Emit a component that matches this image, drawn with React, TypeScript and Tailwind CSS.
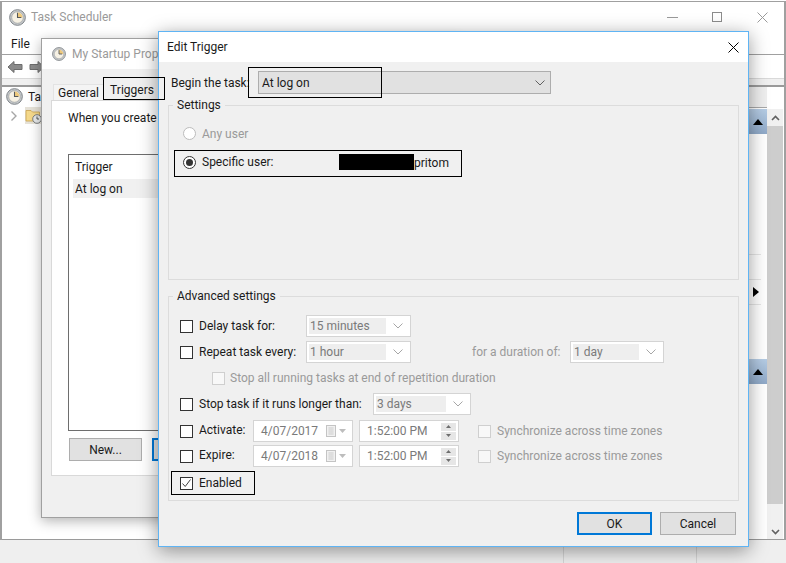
const Clock = ({ size = 16 }: { size?: number }) => (
  <svg width={size} height={size} viewBox="0 0 16 16" className="shrink-0">
    <circle cx="8" cy="8" r="7.4" fill="#c4c7c9" stroke="#7d8286" strokeWidth="0.9" />
    <circle cx="8" cy="8" r="5.4" fill="#f6f1e4" stroke="#8f9498" strokeWidth="0.5" />
    <path d="M8 8V3.2A4.8 4.8 0 0 1 12.8 8Z" fill="#eec97c" />
    <path d="M8 3.6V8H11.6" fill="none" stroke="#55585a" strokeWidth="1" />
  </svg>
);

const FolderClock = () => (
  <svg width="17" height="17" viewBox="0 0 17 17" className="shrink-0">
    <path d="M1 3.5H6L7.5 5H14.5V14H1Z" fill="#f5d98b" stroke="#c9a24e" strokeWidth="0.8" />
    <circle cx="12" cy="12" r="4.3" fill="#e9ebec" stroke="#6f7477" strokeWidth="0.9" />
    <path d="M12 9.5V12H14" fill="none" stroke="#44474a" strokeWidth="0.9" />
  </svg>
);

const NavArrow = ({ flip }: { flip?: boolean }) => (
  <svg width="16" height="14" viewBox="0 0 16 14" className={flip ? "-scale-x-100" : ""}>
    <path d="M1 7L7 1.5V4.5H15V9.5H7V12.5Z" fill="#8b8b8b" stroke="#6c6c6c" strokeWidth="1" />
  </svg>
);

const Chevron = ({ dark }: { dark?: boolean }) => (
  <svg width="10" height="6" viewBox="0 0 10 6" className="shrink-0">
    <path d="M0.5 0.5L5 5L9.5 0.5" fill="none" stroke={dark ? "#606060" : "#a6a6a6"} strokeWidth="1" />
  </svg>
);

const Check = ({ checked, disabled }: { checked?: boolean; disabled?: boolean }) => (
  <span
    className={
      disabled
        ? "w-[13px] h-[13px] shrink-0 border border-[#cfcfcf] bg-[#f8f8f8]"
        : "w-[13px] h-[13px] shrink-0 border border-[#333333] bg-white flex items-center justify-center"
    }
  >
    {checked && (
      <svg width="11" height="11" viewBox="0 0 11 11">
        <path d="M1.5 5.5L4.2 8.5L9.5 1.5" fill="none" stroke="#444444" strokeWidth="1" />
      </svg>
    )}
  </span>
);

const Radio = ({ on }: { on?: boolean }) => (
  <span
    className={
      on
        ? "w-[13px] h-[13px] shrink-0 rounded-full border border-[#333333] bg-white flex items-center justify-center"
        : "w-[13px] h-[13px] shrink-0 rounded-full border border-[#bcbcbc] bg-white"
    }
  >
    {on && <span className="w-[7px] h-[7px] rounded-full bg-[#333333]" />}
  </span>
);

const Combo = ({ value, width }: { value: string; width: string }) => (
  <div className={`${width} h-[22px] shrink-0 flex items-center border border-[#d4d4d4] bg-white p-[2px] pr-[7px]`}>
    <div className="flex-1 h-full flex items-center pl-[1px] bg-[#eeeeee] text-[#7a7a7a]">{value}</div>
    <span className="ml-[7px]">
      <Chevron />
    </span>
  </div>
);

const DateBox = ({ value }: { value: string }) => (
  <div className="w-[100px] h-[22px] shrink-0 flex items-center border border-[#d4d4d4] bg-white pl-[7px] text-[#7a7a7a]">
    <span className="w-[65px]">{value}</span>
    <svg width="21" height="12" viewBox="0 0 21 12">
      <rect x="0.5" y="0.5" width="9" height="11" fill="#f1f1f1" stroke="#c4c4c4" />
      <path d="M2 3H8M2 5H8M2 7H8M2 9H8M4 2V10M6 2V10" stroke="#d0d0d0" strokeWidth="0.7" />
      <path d="M13 4H20L16.5 8Z" fill="#bdbdbd" />
    </svg>
  </div>
);

const TimeBox = ({ value }: { value: string }) => (
  <div className="w-[100px] h-[22px] shrink-0 flex items-center justify-between border border-[#d4d4d4] bg-white pl-[7px] pr-[2px] text-[#7a7a7a]">
    <span>{value}</span>
    <div className="flex flex-col gap-[1px]">
      <div className="w-[15px] h-[8px] bg-[#e6e6e6] flex items-center justify-center">
        <svg width="5" height="3" viewBox="0 0 5 3">
          <path d="M2.5 0L5 3H0Z" fill="#6e6e6e" />
        </svg>
      </div>
      <div className="w-[15px] h-[8px] bg-[#e6e6e6] flex items-center justify-center">
        <svg width="5" height="3" viewBox="0 0 5 3">
          <path d="M0 0H5L2.5 3Z" fill="#6e6e6e" />
        </svg>
      </div>
    </div>
  </div>
);

const Group = ({ title, height, children }: { title: string; height: string; children: React.ReactNode }) => (
  <div className={`relative ${height} border border-[#dcdcdc]`}>
    <span className="absolute -top-[9px] left-[4px] px-[4px] bg-[#f0f0f0] leading-[16px]">{title}</span>
    {children}
  </div>
);

const BlueBar = () => (
  <div className="h-[25px] flex items-center justify-center bg-linear-to-b from-[#b6cde5] to-[#8fa9c8]">
    <svg width="10" height="6" viewBox="0 0 10 6">
      <path d="M5 0L10 6H0Z" fill="#000000" />
    </svg>
  </div>
);

const Annotation = ({ className }: { className: string }) => (
  <div className={`absolute border border-black pointer-events-none ${className}`} />
);

export default function App() {
  return (
    <div className="relative w-[786px] h-[563px] overflow-hidden bg-white text-[12px] leading-[16px] text-[#1a1a1a] font-['Roboto',sans-serif]">
      {/* Task Scheduler main window */}
      <div className="h-full flex flex-col pt-[1px]">
        <div className="flex-1 flex flex-col min-h-0 border-t border-l-2 border-r-2 border-[#a0a0a0]">
          <div className="h-[30px] mb-[2px] shrink-0 flex items-center pl-[7px]">
            <Clock size={17} />
            <span className="ml-[5px] text-[#9a9a9a]">Task Scheduler</span>
            <div className="ml-auto flex items-center">
              <span className="w-[11px] h-[1px] bg-[#9a9a9a]" />
              <span className="ml-[34px] w-[10px] h-[10px] border border-[#8c8c8c]" />
              <svg width="11" height="11" viewBox="0 0 11 11" className="ml-[35px] mr-[16px]">
                <path d="M0.5 0.5L10.5 10.5M10.5 0.5L0.5 10.5" stroke="#9a9a9a" strokeWidth="1" />
              </svg>
            </div>
          </div>
          <div className="h-[20px] shrink-0 flex items-center pl-[9px]">
            <span>File</span>
          </div>
          <div className="h-[24px] shrink-0 flex items-center pl-[5px] gap-[6px] border-t border-[#a0a0a0]">
            <NavArrow />
            <NavArrow flip />
          </div>
          <div className="h-[7px] shrink-0 bg-[#f0f0f0] border-t border-[#d9d9d9]" />
          <div className="flex-1 min-h-0 flex border-t-2 border-b border-[#9a9a9a]">
            <div className="flex-1 pl-[4px] pt-[1px]">
              <div className="flex items-center gap-[5px] h-[17px]">
                <Clock size={17} />
                <span>Tas</span>
              </div>
              <div className="flex items-center h-[17px] mt-[2px] pl-[5px]">
                <svg width="6" height="10" viewBox="0 0 6 10">
                  <path d="M0.5 0.5L5 5L0.5 9.5" fill="none" stroke="#a6a6a6" strokeWidth="1.4" />
                </svg>
                <span className="ml-[8px] bg-[#e6e2d8]">
                  <FolderClock />
                </span>
              </div>
            </div>
            <div className="w-[18px] shrink-0 flex flex-col bg-white">
              <div className="h-[21px] shrink-0 border-b border-[#a8a8a8] bg-[#efefef]" />
              <div className="mt-[1px]">
                <BlueBar />
              </div>
              <div className="mt-[120px] h-[1px] w-[12px] bg-[#e6e6e6]" />
              <div className="mt-[24px] h-[1px] w-[12px] bg-[#e6e6e6]" />
              <div className="mt-[6px] h-[12px] flex items-center pl-[4px]">
                <svg width="6" height="10" viewBox="0 0 6 10">
                  <path d="M0 0L6 5L0 10Z" fill="#000000" />
                </svg>
              </div>
              <div className="mt-[6px] h-[1px] w-[12px] bg-[#e6e6e6]" />
              <div className="mt-[54px]">
                <BlueBar />
              </div>
            </div>
            <div className="w-[16px] mr-[1px] shrink-0 flex flex-col pt-[22px] bg-white">
              <div className="h-[17px] shrink-0 flex items-center justify-center bg-[#f0f0f0]">
                <svg width="9" height="6" viewBox="0 0 9 6">
                  <path d="M1 5L4.5 1.5L8 5" fill="none" stroke="#606060" strokeWidth="1.6" />
                </svg>
              </div>
              <div className="h-[378px] shrink-0 bg-[#cdcdcd]" />
              <div className="flex-1 flex items-end justify-center pb-[4px] bg-[#f0f0f0]">
                <svg width="9" height="6" viewBox="0 0 9 6">
                  <path d="M1 1L4.5 4.5L8 1" fill="none" stroke="#606060" strokeWidth="1.6" />
                </svg>
              </div>
            </div>
          </div>
        </div>
        <div className="h-[23px] shrink-0 flex bg-[#efefef]">
          <div className="w-[564px] border-r border-[#d6d6d6]" />
          <div className="w-[133px] border-r border-[#d6d6d6]" />
        </div>
      </div>

      {/* My Startup Properties dialog */}
      <div className="absolute left-[41px] top-[38px] w-[420px] h-[480px] flex flex-col overflow-hidden bg-[#f0f0f0] border border-[#a0a0a0] shadow-[0_3px_12px_rgba(0,0,0,0.3)]">
        <div className="h-[30px] shrink-0 flex items-center pl-[10px] gap-[6px] bg-white text-[#9a9a9a]">
          <Clock size={14} />
          <span className="whitespace-nowrap">My Startup Prop</span>
        </div>
        <div className="flex h-[16px] mt-[15px] ml-[11px]">
          <div className="w-[50px] flex items-center justify-center bg-[#f4f4f4] border-t border-l border-[#e3e3e3]">General</div>
          <div className="w-[58px] flex items-center justify-center -mt-[5px]">Triggers</div>
        </div>
        <div className="ml-[9px] h-[376px] w-[400px] bg-white border border-[#d9d9d9] pl-[16px] pt-[9px]">
          <p className="whitespace-nowrap">When you create</p>
          <div className="mt-[28px] h-[277px] w-[360px] border border-[#6e6e6e] px-[4px]">
            <div className="h-[24px] flex items-center pl-[2px]">Trigger</div>
            <div className="h-[19px] flex items-center pl-[2px] bg-[#f0f0f0]">At log on</div>
          </div>
          <div className="flex gap-[10px] mt-[7px] ml-[1px]">
            <button className="w-[73px] h-[23px] bg-[#e1e1e1] border border-[#adadad]">New...</button>
            <div className="w-[73px] h-[23px] bg-[#e1e1e1] border-2 border-[#0078d7]" />
          </div>
        </div>
      </div>

      {/* Edit Trigger dialog */}
      <div className="absolute left-[158px] top-[31px] w-[591px] h-[516px] flex flex-col bg-[#f0f0f0] border border-[#5fb4f4] shadow-[0_4px_18px_rgba(0,0,0,0.4)]">
        <div className="h-[30px] shrink-0 flex items-center justify-between pl-[8px] pr-[9px] bg-white">
          <span>Edit Trigger</span>
          <svg width="11" height="11" viewBox="0 0 11 11">
            <path d="M0.5 0.5L10.5 10.5M10.5 0.5L0.5 10.5" stroke="#000000" strokeWidth="1" />
          </svg>
        </div>
        <div className="flex-1 flex flex-col px-[9px] pt-[9px]">
          <div className="h-[23px] flex items-center pl-[3px]">
            <span className="w-[87px] shrink-0">Begin the task:</span>
            <div className="w-[293px] h-[23px] flex items-center justify-between pl-[3px] pr-[5px] bg-[#e1e1e1] border border-[#adadad]">
              <span>At log on</span>
              <Chevron dark />
            </div>
          </div>
          <div className="mt-[11px]">
            <Group title="Settings" height="h-[175px]">
              <div className="flex items-center gap-[6px] h-[20px] mt-[17px] ml-[14px] text-[#9a9a9a]">
                <Radio />
                <span className="pt-[1px]">Any user</span>
              </div>
              <div className="flex items-center gap-[6px] h-[20px] mt-[9px] ml-[14px]">
                <Radio on />
                <span className="w-[137px]">Specific user:</span>
                <span className="flex items-center -ml-[6px]">
                  <span className="w-[75px] h-[16px] bg-black" />
                  <span className="pt-[2px]">pritom</span>
                </span>
              </div>
            </Group>
          </div>
          <div className="mt-[16px]">
            <Group title="Advanced settings" height="h-[205px]">
              <div className="flex items-center h-[22px] mt-[18px] ml-[11px]">
                <Check />
                <span className="w-[107px] ml-[6px] shrink-0 -mt-[1px]">Delay task for:</span>
                <Combo value="15 minutes" width="w-[105px]" />
              </div>
              <div className="flex items-center h-[22px] mt-[4px] ml-[11px]">
                <Check />
                <span className="w-[107px] ml-[6px] shrink-0 -mt-[1px]">Repeat task every:</span>
                <Combo value="1 hour" width="w-[105px]" />
                <span className="w-[98px] ml-[61px] shrink-0 text-[#9a9a9a]">for a duration of:</span>
                <Combo value="1 day" width="w-[94px]" />
              </div>
              <div className="flex items-center h-[22px] mt-[4px] ml-[43px]">
                <Check disabled />
                <span className="ml-[5px] text-[#9a9a9a]">Stop all running tasks at end of repetition duration</span>
              </div>
              <div className="flex items-center h-[22px] mt-[4px] ml-[11px]">
                <Check />
                <span className="w-[174px] ml-[6px] shrink-0 -mt-[1px]">Stop task if it runs longer than:</span>
                <Combo value="3 days" width="w-[98px]" />
              </div>
              <div className="flex items-center h-[22px] mt-[5px] ml-[11px]">
                <Check />
                <span className="w-[54px] ml-[6px] shrink-0 -mt-[3px]">Activate:</span>
                <DateBox value="4/07/2017" />
                <span className="w-[6px]" />
                <TimeBox value="1:52:00 PM" />
                <span className="w-[19px]" />
                <Check disabled />
                <span className="ml-[6px] text-[#9a9a9a]">Synchronize across time zones</span>
              </div>
              <div className="flex items-center h-[22px] mt-[3px] ml-[11px]">
                <Check />
                <span className="w-[54px] ml-[6px] shrink-0 -mt-[3px]">Expire:</span>
                <DateBox value="4/07/2018" />
                <span className="w-[6px]" />
                <TimeBox value="1:52:00 PM" />
                <span className="w-[19px]" />
                <Check disabled />
                <span className="ml-[6px] text-[#9a9a9a]">Synchronize across time zones</span>
              </div>
              <div className="flex items-center h-[22px] mt-[5px] ml-[11px]">
                <Check checked />
                <span className="ml-[6px] -mt-[1px]">Enabled</span>
              </div>
            </Group>
          </div>
          <div className="flex justify-end gap-[8px] mt-[11px] pr-[3px]">
            <button className="w-[75px] h-[23px] bg-[#e1e1e1] border-2 border-[#0078d7]">OK</button>
            <button className="w-[76px] h-[23px] bg-[#e1e1e1] border border-[#adadad]">Cancel</button>
          </div>
        </div>
      </div>

      {/* black annotation boxes drawn over the screenshot */}
      <Annotation className="left-[103px] top-[77px] w-[62px] h-[23px]" />
      <Annotation className="left-[248px] top-[67px] w-[134px] h-[31px]" />
      <Annotation className="left-[174px] top-[150px] w-[288px] h-[27px]" />
      <Annotation className="left-[171px] top-[471px] w-[84px] h-[24px]" />
    </div>
  );
}
